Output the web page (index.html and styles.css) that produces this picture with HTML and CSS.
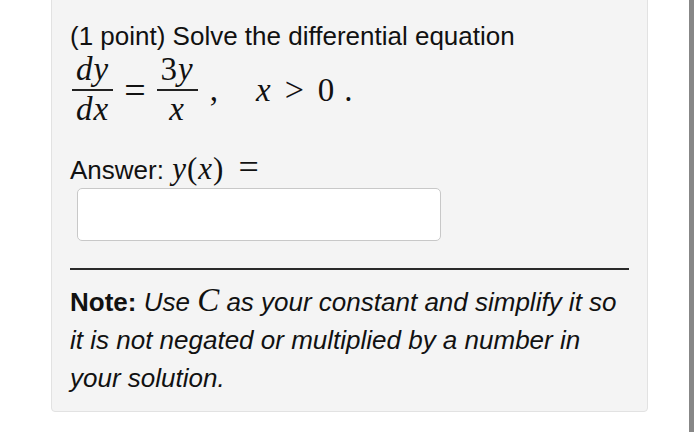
FILE: index.html
```html
<!DOCTYPE html>
<html>
<head>
<meta charset="utf-8">
<link rel="stylesheet" href="styles.css">
</head>
<body>
<div class="page">
  <div class="card">
    <div class="prompt">(1 point) Solve the differential equation</div>
    <div class="eq">
      <span class="frac"><span class="num">dy</span><span class="den">dx</span></span>
      <span class="op">=</span>
      <span class="frac"><span class="num"><span class="up">3</span>y</span><span class="den">x</span></span>
      <span class="comma">,</span>
      <span class="mi">x</span><span class="op gt">&gt;</span><span class="up">0</span><span class="dot">.</span>
    </div>
    <div class="answer">Answer: <span class="mi">y</span><span class="up">(</span><span class="mi">x</span><span class="up">)</span> <span class="op">=</span></div>
    <div class="input"></div>
    <hr class="rule">
    <p class="note"><b>Note:</b> <i>Use <span class="mc">C</span> as your constant and simplify it so it is not negated or multiplied by a number in your solution.</i></p>
  </div>
  <div class="bar"></div>
</div>
</body>
</html>
```

FILE: styles.css
```css
html, body {
  margin: 0;
  padding: 0;
  background: #ffffff;
}
.page {
  display: flex;
  align-items: flex-start;
  height: 434px;
  overflow: hidden;
}
.card {
  margin-left: 51px;
  margin-top: -10px;
  width: 597px;
  box-sizing: border-box;
  height: 422px;
  background: #f4f4f4;
  border: 1px solid #e2e2e2;
  border-radius: 4px;
  padding: 30px 18px 0 18px;
  font-family: "Liberation Sans", Arial, sans-serif;
  font-size: 26px;
  color: #111;
}
.prompt {
  line-height: 30px;
}
.eq {
  display: flex;
  align-items: center;
  font-family: "Liberation Serif", "Times New Roman", serif;
  font-style: italic;
  font-size: 33px;
  height: 74px;
  margin-top: 2px;
  padding-left: 2px;
}
.frac {
  display: inline-flex;
  flex-direction: column;
  align-items: center;
}
.num {
  padding: 0 4px 4px;
  border-bottom: 2px solid #222;
  line-height: 32px;
  letter-spacing: 1px;
}
.den {
  padding: 0 4px;
  line-height: 36px;
  letter-spacing: 1px;
}
.up {
  font-style: normal;
}
.op {
  font-family: "Liberation Serif", serif;
  font-style: normal;
  font-size: 38px;
  line-height: 1;
  margin: 0 11px;
}
.comma {
  font-style: normal;
  margin: 0 38px 0 12px;
}
.gt {
  font-size: 34px;
  margin: 0 14px;
}
.dot {
  font-style: normal;
  margin-left: 10px;
}
.mi {
  font-family: "Liberation Serif", "Times New Roman", serif;
  font-style: italic;
  font-size: 33px;
}
.answer {
  margin-top: 22px;
  height: 34px;
  line-height: 34px;
}
.answer .mi,
.answer .up {
  font-family: "Liberation Serif", serif;
  font-size: 31px;
  line-height: 1;
}
.answer .mi {
  margin: 0 1px;
}
.answer .op {
  font-size: 36px;
  margin: 0 4px 0 8px;
}
.input {
  margin: 5px 0 0 7px;
  width: 364px;
  height: 53px;
  box-sizing: border-box;
  background: #fff;
  border: 1px solid #c8c8c8;
  border-radius: 5px;
}
.rule {
  margin: 27px 0 0 0;
  border: 0;
  border-top: 2px solid #2a2a2a;
  height: 0;
}
.note {
  margin: 13px 0 0 0;
  line-height: 38px;
}
.mc {
  font-family: "Liberation Serif", serif;
  font-size: 33px;
  line-height: 1;
}
.bar {
  margin-left: 41px;
  width: 5px;
  height: 432px;
  background: #878787;
}
```
